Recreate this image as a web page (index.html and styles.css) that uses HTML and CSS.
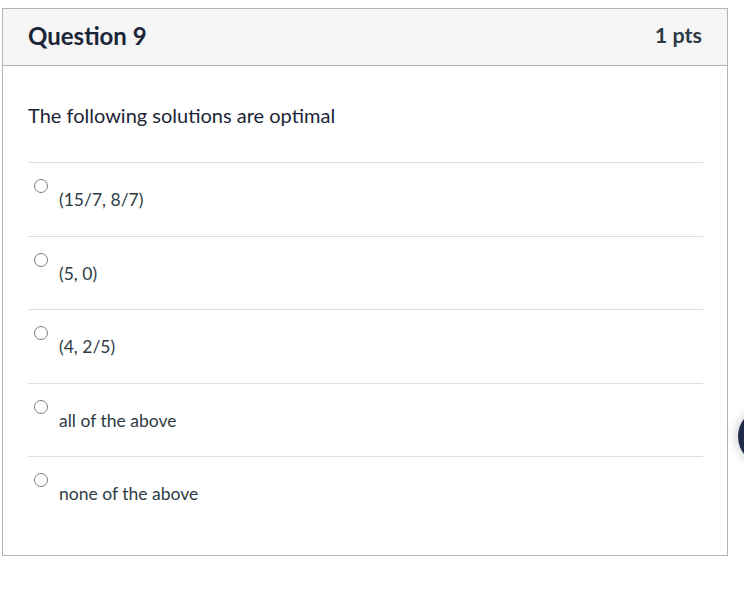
FILE: index.html
```html
<!DOCTYPE html>
<html>
<head>
<meta charset="utf-8">
<link rel="stylesheet" href="styles.css">
</head>
<body>
<div class="page">
  <div class="card">
    <div class="header">
      <h2 class="title">Question 9</h2>
      <div class="pts">1 pts</div>
    </div>
    <div class="content">
      <p class="question">The following solutions are optimal</p>
      <div class="answers">
        <div class="answer"><span class="radio"></span><span class="label">(15/7, 8/7)</span></div>
        <div class="answer"><span class="radio"></span><span class="label">(5, 0)</span></div>
        <div class="answer"><span class="radio"></span><span class="label">(4, 2/5)</span></div>
        <div class="answer"><span class="radio"></span><span class="label">all of the above</span></div>
        <div class="answer last"><span class="radio"></span><span class="label">none of the above</span></div>
      </div>
    </div>
  </div>
</div>
<div class="fab-clip"><div class="fab"></div></div>
</body>
</html>
```

FILE: styles.css
```css
html, body {
  margin: 0;
  padding: 0;
  background: #ffffff;
  font-family: Lato, "Noto Sans", sans-serif;
  color: #2d3b45;
  overflow: hidden;
}

.page {
  padding: 8px 0 0 2px;
}

.card {
  width: 726px;
  box-sizing: border-box;
  border: 1px solid #b4b4b4;
}

.header {
  height: 56px;
  background: #f5f5f5;
  border-bottom: 1px solid #b4b4b4;
  display: flex;
  align-items: center;
  justify-content: space-between;
  padding: 0 25px 0 25px;
}

.title {
  margin: 0;
  font-size: 24px;
  font-weight: 700;
  color: #1c2537;
  position: relative;
  top: -2px;
}

.pts {
  font-size: 21.5px;
  font-weight: 700;
  color: #2d3b45;
  position: relative;
  top: -2px;
}

.content {
  padding: 0 24px 0 25px;
}

.question {
  margin: 0;
  padding: 37px 0 35px;
  font-size: 20px;
  line-height: 24px;
  color: #1c2537;
}

.answer {
  height: 73.5px;
  box-sizing: border-box;
  border-top: 1px solid #dcdfe2;
  display: flex;
  align-items: flex-start;
  padding-top: 16px;
}

.answer.last {
  height: 99px;
}

.radio {
  width: 14px;
  height: 14px;
  box-sizing: border-box;
  border: 1px solid #7d7d7d;
  border-radius: 50%;
  margin-left: 6px;
  flex: none;
}

.label {
  margin-left: 11px;
  margin-top: 10px;
  font-size: 17.5px;
  line-height: 21px;
  color: #2d3b45;
}

.fab-clip {
  position: fixed;
  top: 380px;
  right: 0;
  width: 30px;
  height: 110px;
  overflow: hidden;
}

.fab {
  position: absolute;
  left: 24px;
  top: 28px;
  width: 57px;
  height: 57px;
  border-radius: 50%;
  background: #1d2a47;
  box-shadow: 0 0 12px rgba(0, 0, 0, 0.25);
}
```
